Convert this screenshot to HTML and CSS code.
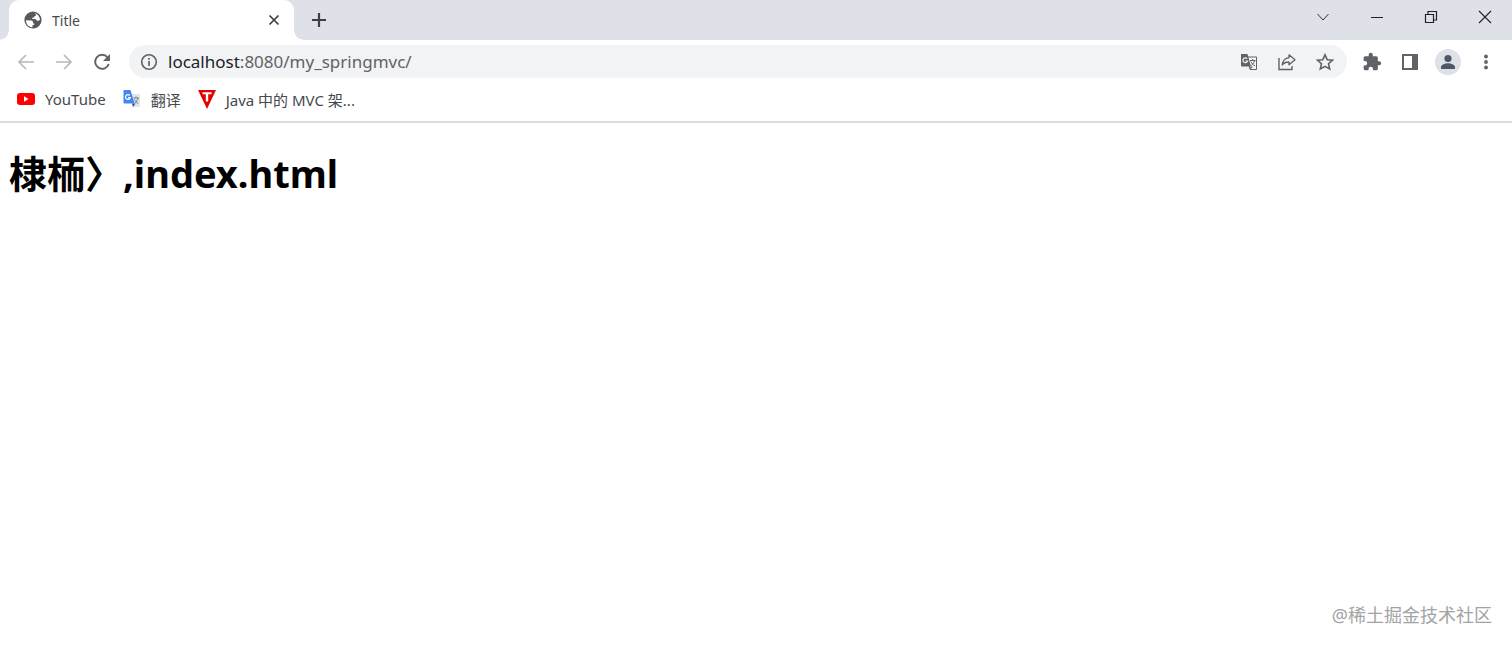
FILE: index.html
```
<!DOCTYPE html>
<html lang="zh-CN">
<head>
    <meta charset="UTF-8">
    <meta name="viewport" content="width=device-width, initial-scale=1.0">
    <title>Title</title>
    <link rel="stylesheet" href="styles.css">
</head>
<body>
    <header class="browser">
        <div class="tab-strip">
            <div class="tab">
                <svg width="18" height="18" viewBox="0 0 18 18">
                    <circle cx="9" cy="9" r="8.600" fill="#55585c"/>
                    <path d="M2 9.200l5.200.3c1.300.1 1.800.8 1.800 2v.8l1.200.2v1.300l-1.700.4v2.100C4.600 16.200 2 13.200 2 9.200zM10.500 2.200c3 .6 5.300 3.200 5.500 6.600-.8 1-2.200 1.200-3.200.6-.8-.5-.9-1.200-1.500-1.300H8.200V6.700l2-.3.300-1.300 1.500-.4V3.600z" fill="#fff"/>
                </svg>
                <span class="tab-title">Title</span>
                <button class="tab-close" aria-label="Close tab">
                    <svg width="12" height="12" viewBox="0 0 12 12"><path d="M1.500 1.500l9 9M10.500 1.500l-9 9" stroke="#3c4043" stroke-width="1.700"/></svg>
                </button>
            </div>
            <button class="new-tab" aria-label="New tab">
                <svg width="14" height="14" viewBox="0 0 14 14"><path d="M7 0v14M0 7h14" stroke="#3c4043" stroke-width="2.200"/></svg>
            </button>
            <div class="window-controls">
                <button aria-label="Search tabs">
                    <svg width="14" height="14" viewBox="0 0 14 14"><path d="M1.500 4l5.500 6 5.500-6" fill="none" stroke="#333"/></svg>
                </button>
                <button aria-label="Minimize">
                    <svg width="14" height="14" viewBox="0 0 14 14"><path d="M1 7.500h12" stroke="#222"/></svg>
                </button>
                <button aria-label="Restore">
                    <svg width="14" height="14" viewBox="0 0 14 14"><path d="M1.500 4.500h8v8h-8zM4 4V1.500h8.500V10H10" fill="none" stroke="#222" stroke-width="1.200"/></svg>
                </button>
                <button aria-label="Close">
                    <svg width="14" height="14" viewBox="0 0 14 14"><path d="M1 1l12 12M13 1L1 13" stroke="#222" stroke-width="1.100"/></svg>
                </button>
            </div>
        </div>

        <div class="toolbar">
            <button class="tool faded" aria-label="Back">
                <svg width="18" height="18" viewBox="0 0 18 18"><path d="M17 9H2.500M9 2L2 9l7 7" fill="none" stroke="currentColor" stroke-width="1.600"/></svg>
            </button>
            <button class="tool faded" aria-label="Forward">
                <svg width="18" height="18" viewBox="0 0 18 18"><path d="M1 9h14.500M9 2l7 7-7 7" fill="none" stroke="currentColor" stroke-width="1.600"/></svg>
            </button>
            <button class="tool" aria-label="Reload">
                <svg width="18" height="18" viewBox="0 0 18 18"><path d="M14.500 4.300A7 7 0 1 0 15.800 11" fill="none" stroke="currentColor" stroke-width="1.900"/><path d="M17 1v7h-7z" fill="currentColor"/></svg>
            </button>
            <div class="address-bar">
                <svg class="info" width="18" height="18" viewBox="0 0 18 18"><circle cx="9" cy="9" r="7.300" fill="none" stroke="#5f6368" stroke-width="1.600"/><path d="M9 8v5M9 5v1.800" stroke="#5f6368" stroke-width="1.700"/></svg>
                <label for="url">localhost</label>
                <input type="text" id="url" value=":8080/my_springmvc/">
                <button class="tool" aria-label="Translate this page">
                    <svg width="18" height="18" viewBox="0 0 18 18">
                        <path d="M7 4h9.500v12.500H10z" fill="none" stroke="currentColor"/>
                        <path d="M1 1h6.500l3.500 12.500H2a1 1 0 0 1-1-1z" fill="currentColor"/>
                        <path d="M10.500 13.500L10 17l3-3.500z" fill="currentColor"/>
                        <path d="M7.200 5.700A2.400 2.400 0 1 0 7.600 8H5.500" fill="none" stroke="#f1f3f4" stroke-width="1.200"/>
                        <path d="M10 7.500h5.500M12.700 6v1.500M14.600 7.500c-.5 2.500-2 4-3.300 5M11 8.500c.8 2 2.200 3.200 4 4.500" fill="none" stroke="currentColor"/>
                    </svg>
                </button>
                <button class="tool" aria-label="Share">
                    <svg width="18" height="18" viewBox="0 0 18 18"><path d="M1 5v11.500h13V13" fill="none" stroke="currentColor" stroke-width="1.400"/><path d="M11 1.800l6 5-6 5V9c-3 0-5.200.8-6.800 3 .5-4 2.800-6.700 6.800-7.300z" fill="none" stroke="currentColor" stroke-width="1.300" stroke-linejoin="round"/></svg>
                </button>
                <button class="tool" aria-label="Bookmark this tab">
                    <svg width="18" height="18" viewBox="0 0 18 18"><path d="M9 1.800l2.200 4.900 5.300.5-4 3.500 1.200 5.300L9 13.300 4.300 16l1.200-5.300-4-3.500 5.300-.5z" fill="none" stroke="currentColor" stroke-width="1.600"/></svg>
                </button>
            </div>
            <button class="tool" aria-label="Extensions">
                <svg width="20" height="20" viewBox="0 0 24 24"><path d="M20.500 11H19V7a2 2 0 0 0-2-2h-4V3.500a2.500 2.500 0 0 0-5 0V5H4a2 2 0 0 0-2 2v3.800h1.500a2.700 2.700 0 0 1 0 5.400H2V20a2 2 0 0 0 2 2h3.800v-1.500a2.700 2.700 0 0 1 5.400 0V22H17a2 2 0 0 0 2-2v-4h1.500a2.500 2.500 0 0 0 0-5z" fill="currentColor"/></svg>
            </button>
            <button class="tool" aria-label="Side panel">
                <svg width="18" height="18" viewBox="0 0 18 18"><path d="M1 1h16v16H1zM3 3v12h8V3z" fill="currentColor" fill-rule="evenodd"/></svg>
            </button>
            <button class="tool" aria-label="Profile">
                <svg width="26" height="26" viewBox="0 0 26 26"><circle cx="13" cy="13" r="13" fill="#dde1e8"/><circle cx="13" cy="9.500" r="3.600" fill="#4d5766"/><path d="M6 20v-2c0-2.500 4.500-3.800 7-3.800s7 1.300 7 3.800v2z" fill="#4d5766"/></svg>
            </button>
            <button class="tool" aria-label="Menu">
                <svg width="18" height="18" viewBox="0 0 18 18" fill="currentColor"><circle cx="9" cy="3.500" r="1.900"/><circle cx="9" cy="9" r="1.900"/><circle cx="9" cy="14.500" r="1.900"/></svg>
            </button>
        </div>

        <nav class="bookmarks">
            <a href="#">
                <svg width="18" height="18" viewBox="0 0 18 18"><rect y="3" width="18" height="12" rx="3" fill="#f00"/><path d="M7 6.300v5.400L11.500 9z" fill="#fff"/></svg>
                YouTube
            </a>
            <a href="#">
                <svg width="18" height="18" viewBox="0 0 18 18">
                    <path d="M7 4h9a1 1 0 0 1 1 1v11a1 1 0 0 1-1 1h-6z" fill="#e3e5e8"/>
                    <path d="M10.500 8H16M13 6.500V8M15 8c-.5 2.500-1.800 4-3.500 5M11.500 9.500c.8 1.800 2 3 3.800 4" fill="none" stroke="#6a7f94"/>
                    <path d="M9 13.500h3.500L10 17z" fill="#2b4fc4"/>
                    <path d="M1 0h6.500l4 13.500H1.500a1 1 0 0 1-1-1V.8z" fill="#4285f4"/>
                    <path d="M6.800 5.500A2.400 2.400 0 1 0 7.300 7.600H5" fill="none" stroke="#fff" stroke-width="1.200"/>
                </svg>
                翻译
            </a>
            <a href="#">
                <svg width="18" height="20" viewBox="0 0 18 20"><path d="M0 1h18L9 20z" fill="#e60000"/><path d="M4.500 3.200h9v2h-3.300v7.300H7.800V5.200H4.500z" fill="#fff"/></svg>
                Java 中的 MVC 架...
            </a>
        </nav>
    </header>

    <main>
        <h1>棣栭〉,index.html</h1>
    </main>
    <div class="watermark">@稀土掘金技术社区</div>
</body>
</html>
```
FILE: styles.css
```
body {
    margin: 0;
    min-height: 100vh;
    background: #fff;
    color: #000;
    font-family: "Noto Sans", "Noto Sans CJK SC", sans-serif;
}
button {
    display: flex;
    align-items: center;
    justify-content: center;
    padding: 0;
    border: none;
    background: none;
    cursor: pointer;
}
svg {
    flex: none;
}
.browser {
    border-bottom: 2px solid #dadce0;
}

/* tab strip */
.tab-strip {
    display: flex;
    height: 40px;
    background: #dee1e8;
}
.tab {
    position: relative;
    display: flex;
    align-items: center;
    box-sizing: border-box;
    width: 285px;
    margin-left: 9px;
    padding: 0 12px 0 15px;
    border-radius: 10px 10px 0 0;
    background: #fff;
    font-size: 14px;
    color: #45494d;
}
.tab::before,
.tab::after {
    content: "";
    position: absolute;
    bottom: 0;
    width: 9px;
    height: 9px;
}
.tab::before {
    left: -9px;
    background: radial-gradient(circle at 0 0, transparent 8px, #fff 9px);
}
.tab::after {
    right: -9px;
    background: radial-gradient(circle at 100% 0, transparent 8px, #fff 9px);
}
.tab-title {
    flex: 1;
    margin-left: 10px;
}
.tab-close {
    width: 16px;
    height: 16px;
}
.new-tab {
    width: 32px;
    margin-left: 9px;
}
.window-controls {
    display: flex;
    height: 34px;
    margin-left: auto;
}
.window-controls button {
    width: 54px;
}

/* toolbar */
.toolbar {
    display: flex;
    align-items: center;
    height: 43px;
    padding: 0 7px;
}
.tool {
    flex: none;
    width: 38px;
    height: 32px;
    color: #5f6368;
}
.faded {
    color: #b5b7ba;
}
.address-bar {
    display: flex;
    flex: 1;
    align-items: center;
    height: 33px;
    margin: 0 6px 0 8px;
    padding: 0 3px 0 11px;
    border-radius: 17px;
    background: #f1f3f4;
    font-size: 17px;
}
.address-bar label {
    margin-left: 10px;
    color: #202124;
}
.address-bar input {
    flex: 1;
    min-width: 0;
    padding: 0;
    border: none;
    outline: none;
    background: none;
    font: inherit;
    color: #5f6368;
}

/* bookmarks */
.bookmarks {
    display: flex;
    align-items: center;
    gap: 17px;
    padding: 0 17px 6px;
}
.bookmarks a {
    display: flex;
    align-items: center;
    gap: 10px;
    height: 32px;
    font-size: 15px;
    color: #45494d;
    text-decoration: none;
}

/* page */
main {
    padding: 0 9px;
}
h1 {
    margin: 22px 0;
    font-size: 38px;
    line-height: 56px;
}
.watermark {
    position: absolute;
    right: 20px;
    bottom: 18px;
    font-size: 18px;
    color: #a3a3a3;
}
```
